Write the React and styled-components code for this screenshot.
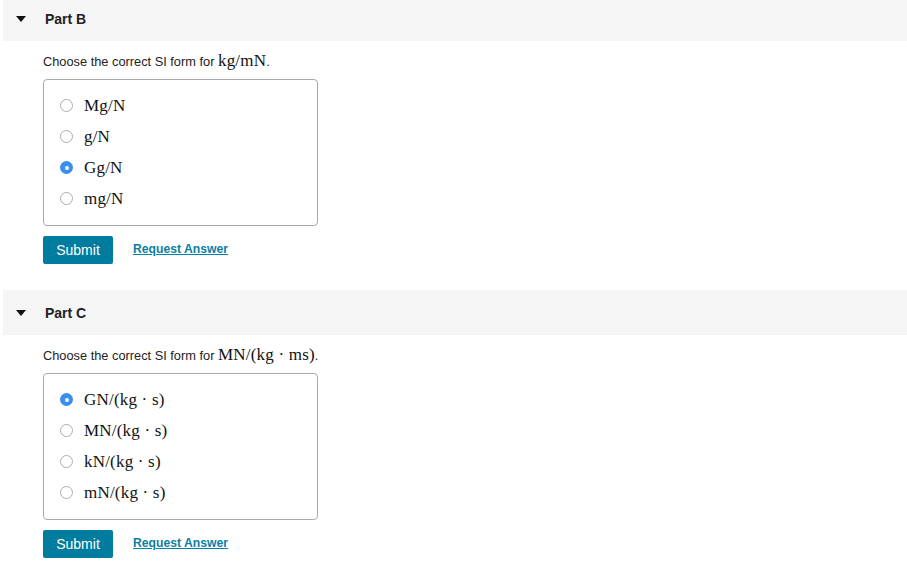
import React from "react";
import styled, { createGlobalStyle } from "styled-components";

const Global = createGlobalStyle`
  html, body { margin: 0; padding: 0; background: #fff; }
  body { font-family: "Liberation Sans", Arial, sans-serif; color: #222; }
`;

const Page = styled.div`
  display: flex;
  flex-direction: column;
  margin-top: -4px;
  padding-bottom: 10px;
`;

const Part = styled.section`
  display: flex;
  flex-direction: column;
  margin-bottom: 26px;
`;

const Header = styled.div`
  margin-left: 3px;
  height: 45px;
  background: #f5f5f5;
  display: flex;
  align-items: center;
  padding-left: 13px;
  gap: 19px;
  box-sizing: border-box;
`;

const Caret = styled.span`
  width: 0;
  height: 0;
  border-left: 5px solid transparent;
  border-right: 5px solid transparent;
  border-top: 6px solid #111;
  margin-top: 1px;
`;

const Title = styled.h3`
  margin: 0;
  font-size: 14px;
  font-weight: bold;
  color: #222;
  padding-top: 1px;
`;

const Body = styled.div`
  padding-left: 43px;
  display: flex;
  flex-direction: column;
  align-items: flex-start;
`;

const Question = styled.p`
  margin: 10px 0 0;
  height: 20px;
  line-height: 20px;
  font-size: 12.8px;
  color: #222;
`;

const Math = styled.span`
  font-family: "Liberation Serif", "Times New Roman", serif;
  font-size: 17px;
  color: #111;
  letter-spacing: 0.2px;
`;

const Options = styled.div`
  margin-top: 8px;
  width: 275px;
  height: 147px;
  box-sizing: border-box;
  border: 1px solid #a9a9a9;
  border-radius: 4px;
  padding: 10px 0 11px;
  display: flex;
  flex-direction: column;
`;

const Option = styled.label`
  height: 31px;
  display: flex;
  align-items: center;
  padding-left: 16px;
  gap: 11px;
`;

const Radio = styled.span`
  width: 13px;
  height: 13px;
  border-radius: 50%;
  box-sizing: border-box;
  border: ${(p) => (p.$checked ? "none" : "1px solid #adadad")};
  background: ${(p) => (p.$checked ? "#3a8ef0" : "#fff")};
  display: flex;
  align-items: center;
  justify-content: center;
  &::after {
    content: "";
    display: ${(p) => (p.$checked ? "block" : "none")};
    width: 4px;
    height: 4px;
    border-radius: 50%;
    background: #fff;
  }
`;

const Actions = styled.div`
  margin-top: 10px;
  display: flex;
  align-items: center;
  gap: 20px;
`;

const Submit = styled.button`
  width: 70px;
  height: 28px;
  border: none;
  border-radius: 2px;
  background: #007c9e;
  color: #fff;
  font-family: "Liberation Sans", Arial, sans-serif;
  font-size: 14px;
  padding: 0;
`;

const Link = styled.a`
  color: #0a7fa3;
  font-size: 12.2px;
  font-weight: bold;
  text-decoration: underline;
  margin-top: -2px;
`;

const parts = [
  {
    name: "Part B",
    q: "kg/mN",
    opts: ["Mg/N", "g/N", "Gg/N", "mg/N"],
    checked: 2,
  },
  {
    name: "Part C",
    q: "MN/(kg · ms)",
    opts: ["GN/(kg · s)", "MN/(kg · s)", "kN/(kg · s)", "mN/(kg · s)"],
    checked: 0,
  },
];

export default function App() {
  return (
    <>
      <Global />
      <Page>
        {parts.map((p) => (
          <Part key={p.name}>
            <Header>
              <Caret />
              <Title>{p.name}</Title>
            </Header>
            <Body>
              <Question>
                Choose the correct SI form for <Math>{p.q}</Math>.
              </Question>
              <Options>
                {p.opts.map((o, i) => (
                  <Option key={o}>
                    <Radio $checked={i === p.checked} />
                    <Math>{o}</Math>
                  </Option>
                ))}
              </Options>
              <Actions>
                <Submit>Submit</Submit>
                <Link href="#">Request Answer</Link>
              </Actions>
            </Body>
          </Part>
        ))}
      </Page>
    </>
  );
}
